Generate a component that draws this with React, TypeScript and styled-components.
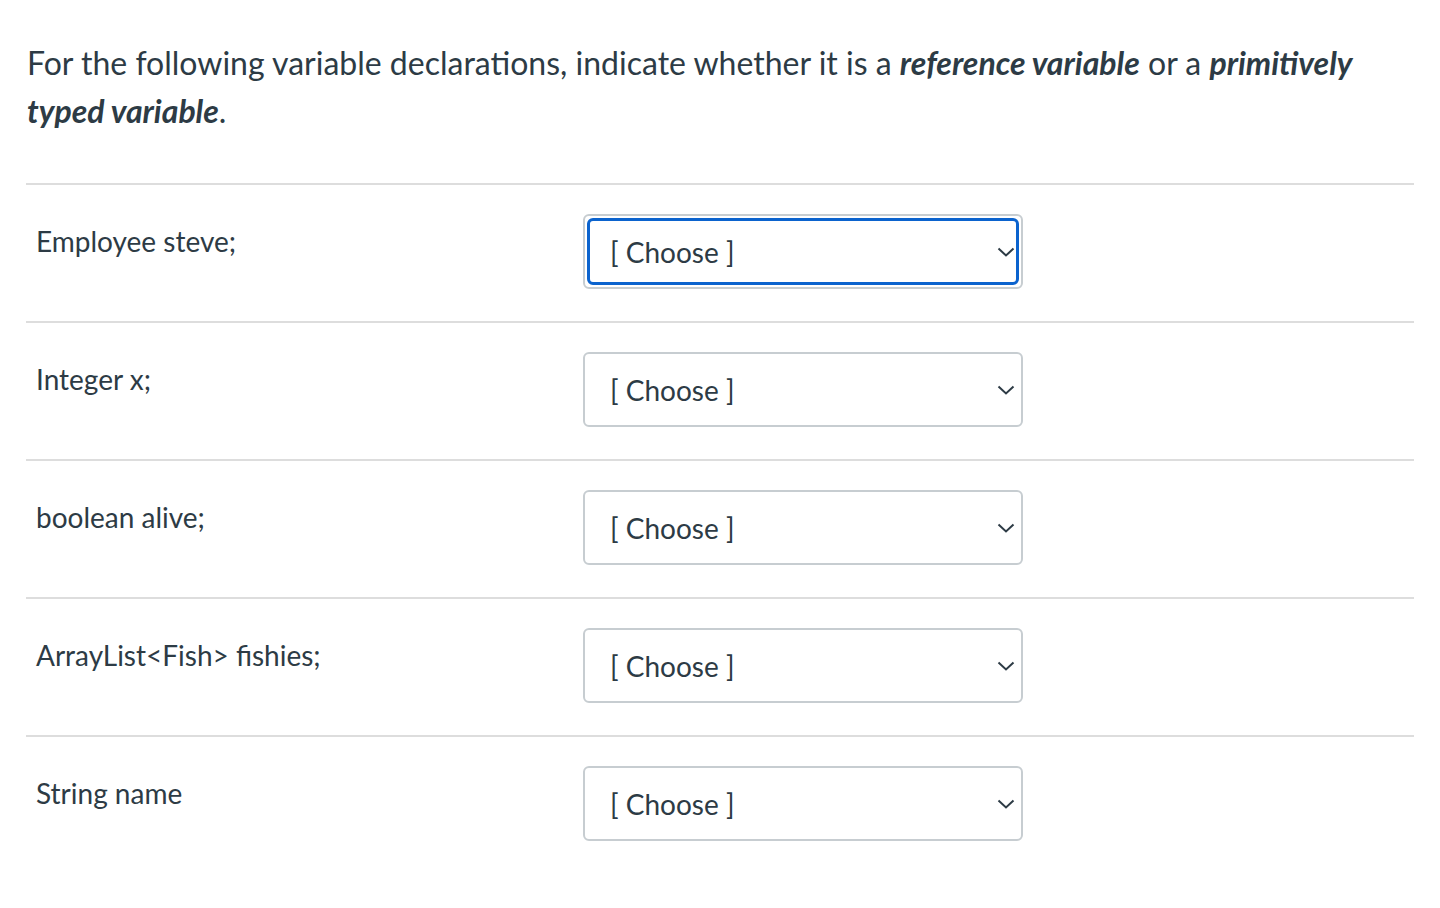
import styled, { createGlobalStyle } from "styled-components";

const GlobalStyle = createGlobalStyle`
  html, body {
    margin: 0;
    padding: 0;
    background: #ffffff;
  }
  body {
    font-family: Lato, "Helvetica Neue", Arial, sans-serif;
    color: #2d3b45;
  }
`;

const Page = styled.div`
  width: 1440px;
  min-height: 908px;
  box-sizing: border-box;
  padding: 39px 26px 0 26px;
`;

const Prompt = styled.p`
  margin: 0 0 48px 1px;
  font-size: 32px;
  line-height: 48px;
  max-width: 1360px;
`;

const Strong = styled.strong`
  font-weight: 700;
  font-style: italic;
`;

const List = styled.div`
  display: flex;
  flex-direction: column;
  border-top: 2px solid #dddddd;
  width: 1388px;
`;

const Row = styled.div`
  display: grid;
  grid-template-columns: 547px 440px;
  align-items: start;
  padding: 29px 0 32px 10px;
  border-bottom: 2px solid #dddddd;

  &:last-child {
    border-bottom: none;
  }
`;

const Label = styled.div`
  font-size: 28px;
  line-height: 42px;
  padding-top: 6px;
`;

const SelectBox = styled.div<{ $focused?: boolean }>`
  position: relative;
  height: 75px;
  box-sizing: border-box;
  border: 2px solid #c7cdd1;
  border-radius: 6px;
  background: #fff;
  display: flex;
  align-items: center;
  padding-left: 25px;
  font-size: 28px;
  color: #2d3b45;

  &::after {
    content: "";
    display: ${(p) => (p.$focused ? "block" : "none")};
    position: absolute;
    inset: 2px;
    border: 3px solid #0b63ce;
    border-radius: 6px;
    pointer-events: none;
  }
`;

const Chevron = styled.svg`
  position: absolute;
  right: 6px;
  top: 50%;
  margin-top: -5px;
  width: 18px;
  height: 10px;
`;

const rows = [
  "Employee steve;",
  "Integer x;",
  "boolean alive;",
  "ArrayList<Fish> fishies;",
  "String name",
];

export default function App() {
  return (
    <>
      <GlobalStyle />
      <Page>
        <Prompt>
          For the following variable declarations, indicate whether it is a{" "}
          <Strong>reference variable</Strong> or a <Strong>primitively typed variable</Strong>.
        </Prompt>
        <List>
          {rows.map((label, i) => (
            <Row key={label}>
              <Label>{label}</Label>
              <SelectBox $focused={i === 0}>
                [ Choose ]
                <Chevron viewBox="0 0 18 10">
                  <path d="M1.5 1.5 L9 8.5 L16.5 1.5" fill="none" stroke="#2d3b45" strokeWidth="2" />
                </Chevron>
              </SelectBox>
            </Row>
          ))}
        </List>
      </Page>
    </>
  );
}
